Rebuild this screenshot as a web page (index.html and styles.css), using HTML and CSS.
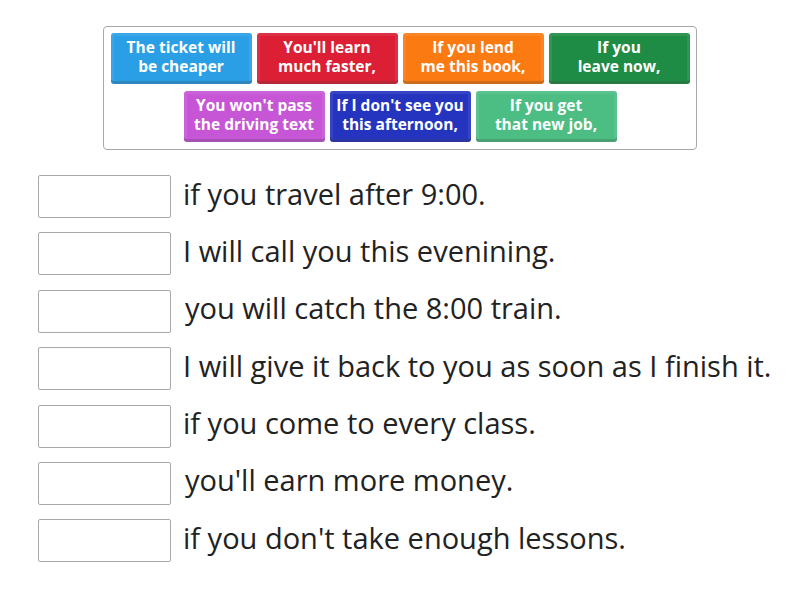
FILE: index.html
```html
<!DOCTYPE html>
<html>
<head>
<meta charset="utf-8">
<link rel="stylesheet" href="styles.css">
</head>
<body>
<div class="page">
  <div class="bank">
    <div class="bank-row">
      <div class="tile blue">The ticket will<br>be cheaper</div>
      <div class="tile red">You'll learn<br>much faster,</div>
      <div class="tile orange">If you lend<br>me this book,</div>
      <div class="tile dgreen">If you<br>leave now,</div>
    </div>
    <div class="bank-row">
      <div class="tile purple">You won't pass<br>the driving text</div>
      <div class="tile navy">If I don't see you<br>this afternoon,</div>
      <div class="tile lgreen">If you get<br>that new job,</div>
    </div>
  </div>
  <div class="rows">
    <div class="row"><div class="slot"></div><div class="text">if you travel after 9:00.</div></div>
    <div class="row"><div class="slot"></div><div class="text">I will call you this evenining.</div></div>
    <div class="row"><div class="slot"></div><div class="text shift">you will catch the 8:00 train.</div></div>
    <div class="row"><div class="slot"></div><div class="text">I will give it back to you as soon as I finish it.</div></div>
    <div class="row"><div class="slot"></div><div class="text">if you come to every class.</div></div>
    <div class="row"><div class="slot"></div><div class="text shift">you'll earn more money.</div></div>
    <div class="row"><div class="slot"></div><div class="text">if you don't take enough lessons.</div></div>
  </div>
</div>
</body>
</html>
```

FILE: styles.css
```css
html, body {
  margin: 0;
  padding: 0;
  background: #fff;
}
body {
  font-family: "Open Sans", "Liberation Sans", sans-serif;
}
.page {
  padding-top: 26px;
}
.bank {
  width: 594px;
  margin-left: 103px;
  box-sizing: border-box;
  border: 1px solid #a9a9a9;
  border-radius: 4px;
  padding: 6px 6px 7px;
  display: flex;
  flex-direction: column;
  gap: 7px;
}
.bank-row {
  display: flex;
  justify-content: center;
  gap: 5px;
}
.tile {
  width: 141px;
  height: 51px;
  box-sizing: border-box;
  border-radius: 3px;
  color: #fff;
  font-weight: bold;
  font-size: 15.5px;
  line-height: 19px;
  text-align: center;
  padding-top: 5px;
  white-space: nowrap;
  box-shadow: inset 0 -3px 0 rgba(0,0,0,0.18), inset 0 0 0 3px rgba(255,255,255,0.08);
}
.blue { background: #2a9fe5; }
.red { background: #dc1f35; }
.orange { background: #fb7a12; }
.dgreen { background: #1f8c45; }
.purple { background: #c656d5; }
.navy { background: #2534bf; }
.lgreen { background: #4cbd83; }
.rows {
  margin-top: 25px;
  padding-left: 38px;
  display: flex;
  flex-direction: column;
  gap: 14.4px;
}
.row {
  display: flex;
  align-items: center;
  height: 43px;
}
.slot {
  width: 133px;
  height: 43px;
  box-sizing: border-box;
  border: 1px solid #a9a9a9;
  border-radius: 2px;
  flex: none;
}
.text {
  margin-left: 12px;
  font-size: 29px;
  color: #222;
  white-space: nowrap;
  margin-top: -7px;
}
.text.shift {
  margin-left: 14px;
}
```
